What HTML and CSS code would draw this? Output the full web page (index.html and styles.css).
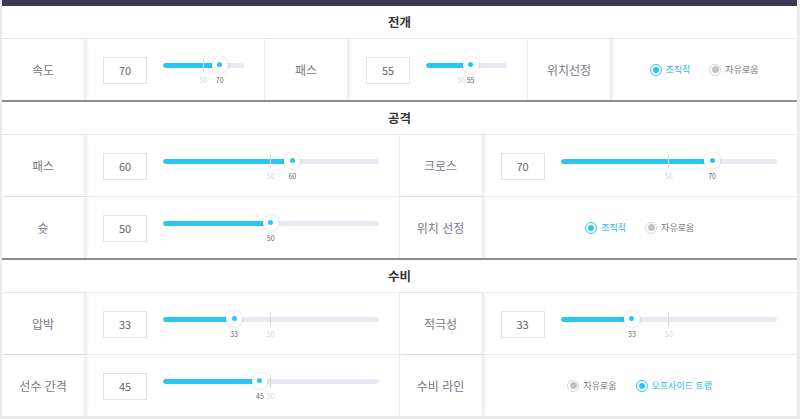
FILE: index.html
```html
<!DOCTYPE html>
<html lang="ko">
<head>
    <meta charset="UTF-8">
    <title>전술 설정</title>
    <link rel="stylesheet" href="styles.css">
</head>
<body>
    <div class="panel">
        <section class="group">
            <h2 class="group-title">전개</h2>
            <div class="row row-3">
                <div class="cell label">속도</div>
                <div class="cell field">
                    <div class="num">70</div>
                    <div class="slider">
                        <div class="track"><div class="fill" style="width:70%"></div></div>
                        <span class="mark" style="left:50%"></span>
                        <span class="tick" style="left:50%">50</span>
                        <span class="thumb" style="left:70%"></span>
                        <span class="val" style="left:70%">70</span>
                    </div>
                </div>
                <div class="cell label">패스</div>
                <div class="cell field">
                    <div class="num">55</div>
                    <div class="slider">
                        <div class="track"><div class="fill" style="width:55%"></div></div>
                        <span class="mark" style="left:50%"></span>
                        <span class="tick tick-near" style="left:50%">50</span>
                        <span class="thumb" style="left:55%"></span>
                        <span class="val" style="left:55%">55</span>
                    </div>
                </div>
                <div class="cell label">위치선정</div>
                <div class="cell options">
                    <label class="radio on"><span class="dot"></span>조직적</label>
                    <label class="radio"><span class="dot"></span>자유로움</label>
                </div>
            </div>
        </section>

        <section class="group">
            <h2 class="group-title">공격</h2>
            <div class="row">
                <div class="cell label">패스</div>
                <div class="cell field">
                    <div class="num">60</div>
                    <div class="slider">
                        <div class="track"><div class="fill" style="width:60%"></div></div>
                        <span class="mark" style="left:50%"></span>
                        <span class="tick" style="left:50%">50</span>
                        <span class="thumb" style="left:60%"></span>
                        <span class="val" style="left:60%">60</span>
                    </div>
                </div>
                <div class="cell label">크로스</div>
                <div class="cell field">
                    <div class="num">70</div>
                    <div class="slider">
                        <div class="track"><div class="fill" style="width:70%"></div></div>
                        <span class="mark" style="left:50%"></span>
                        <span class="tick" style="left:50%">50</span>
                        <span class="thumb" style="left:70%"></span>
                        <span class="val" style="left:70%">70</span>
                    </div>
                </div>
            </div>
            <div class="row">
                <div class="cell label">슛</div>
                <div class="cell field">
                    <div class="num">50</div>
                    <div class="slider">
                        <div class="track"><div class="fill" style="width:50%"></div></div>
                        <span class="thumb" style="left:50%"></span>
                        <span class="val" style="left:50%">50</span>
                    </div>
                </div>
                <div class="cell label">위치 선정</div>
                <div class="cell options">
                    <label class="radio on"><span class="dot"></span>조직적</label>
                    <label class="radio"><span class="dot"></span>자유로움</label>
                </div>
            </div>
        </section>

        <section class="group">
            <h2 class="group-title">수비</h2>
            <div class="row">
                <div class="cell label">압박</div>
                <div class="cell field">
                    <div class="num">33</div>
                    <div class="slider">
                        <div class="track"><div class="fill" style="width:33%"></div></div>
                        <span class="mark" style="left:50%"></span>
                        <span class="tick" style="left:50%">50</span>
                        <span class="thumb" style="left:33%"></span>
                        <span class="val" style="left:33%">33</span>
                    </div>
                </div>
                <div class="cell label">적극성</div>
                <div class="cell field">
                    <div class="num">33</div>
                    <div class="slider">
                        <div class="track"><div class="fill" style="width:33%"></div></div>
                        <span class="mark" style="left:50%"></span>
                        <span class="tick" style="left:50%">50</span>
                        <span class="thumb" style="left:33%"></span>
                        <span class="val" style="left:33%">33</span>
                    </div>
                </div>
            </div>
            <div class="row">
                <div class="cell label">선수 간격</div>
                <div class="cell field">
                    <div class="num">45</div>
                    <div class="slider">
                        <div class="track"><div class="fill" style="width:45%"></div></div>
                        <span class="mark" style="left:50%"></span>
                        <span class="tick" style="left:50%">50</span>
                        <span class="thumb" style="left:45%"></span>
                        <span class="val" style="left:45%">45</span>
                    </div>
                </div>
                <div class="cell label">수비 라인</div>
                <div class="cell options">
                    <label class="radio"><span class="dot"></span>자유로움</label>
                    <label class="radio on"><span class="dot"></span>오프사이드 트랩</label>
                </div>
            </div>
        </section>
    </div>
</body>
</html>
```

FILE: styles.css
```css
body {
    margin: 0;
    background-color: #ebebeb;
    font-family: "Noto Sans CJK KR", "Noto Sans", sans-serif;
    color: #555;
}

.panel {
    margin-left: 2px;
    width: 795px;
    background-color: #fff;
    border-top: 6px solid #3e3a55;
}

.group {
    border-bottom: 2px solid #8d8d98;
}
.group:last-child {
    border-bottom: none;
}

.group-title {
    margin: 0;
    height: 32px;
    line-height: 32px;
    text-align: center;
    font-size: 12.5px;
    font-weight: 700;
    color: #333;
    border-bottom: 1px solid #ebebeb;
}

.row {
    display: grid;
    grid-template-columns: 83px 1fr 83px 1fr;
    height: 61px;
    border-bottom: 1px solid #ebebeb;
}
.row:last-child {
    border-bottom: none;
}
.row-3 {
    grid-template-columns: 83px 180px 83px 180px 83px 1fr;
}

.cell {
    display: flex;
    align-items: center;
    border-right: 1px solid #ececec;
}
.cell:last-child {
    border-right: none;
}

.label {
    justify-content: center;
    position: relative;
    z-index: 1;
    font-size: 12px;
    color: #797886;
    box-shadow: 2px 0 3px rgba(0, 0, 0, 0.07);
}

.field {
    padding: 0 20px 0 18px;
    gap: 16px;
}

.num {
    flex: none;
    width: 42px;
    height: 25px;
    line-height: 25px;
    border: 1px solid #e3e3e6;
    text-align: center;
    font-size: 11px;
    color: #666;
    margin-top: 2px;
}

/* slider */
.slider {
    flex: 1;
    position: relative;
    height: 32px;
}
.track {
    position: absolute;
    left: 0;
    right: 0;
    top: 9px;
    height: 5px;
    border-radius: 3px;
    background-color: #e7eaf2;
    overflow: hidden;
}
.fill {
    height: 100%;
    background-color: #2bc5f4;
    border-radius: 3px;
}
.mark {
    position: absolute;
    top: 4px;
    width: 1px;
    height: 14px;
    margin-left: -0.5px;
    background-color: #d9dce3;
}
.thumb {
    position: absolute;
    top: 3px;
    width: 16px;
    height: 16px;
    margin-left: -8px;
    border-radius: 50%;
    background-color: #fff;
    box-shadow: 0 0 3px rgba(0, 0, 0, 0.18);
}
.thumb::after {
    content: "";
    position: absolute;
    left: 5.5px;
    top: 5.5px;
    width: 5px;
    height: 5px;
    border-radius: 50%;
    background-color: #2bc5f4;
}
.tick,
.val {
    position: absolute;
    top: 22px;
    width: 14px;
    margin-left: -7px;
    text-align: center;
    font-size: 7px;
    line-height: 9px;
}
.tick {
    color: #d3d7df;
}
/* 50 hides behind a value label that sits right next to it */
.tick-near {
    margin-left: -9px;
    width: 8px;
    overflow: hidden;
    text-align: left;
}
.val {
    color: #666;
}

/* radios */
.options {
    justify-content: center;
    gap: 19px;
}
.radio {
    display: flex;
    align-items: center;
    gap: 4px;
    font-size: 9px;
    color: #777;
}
.dot {
    position: relative;
    width: 10px;
    height: 10px;
    border-radius: 50%;
    border: 1.5px solid #d4d4d4;
    background-color: #fff;
}
.dot::after {
    content: "";
    position: absolute;
    left: 1.5px;
    top: 1.5px;
    width: 7px;
    height: 7px;
    border-radius: 50%;
    background-color: #c2c2c2;
}
.radio.on {
    color: #2bb8ee;
}
.radio.on .dot {
    border-color: #2bc5f4;
}
.radio.on .dot::after {
    left: 2px;
    top: 2px;
    width: 6px;
    height: 6px;
    background-color: #2bc5f4;
}
```
